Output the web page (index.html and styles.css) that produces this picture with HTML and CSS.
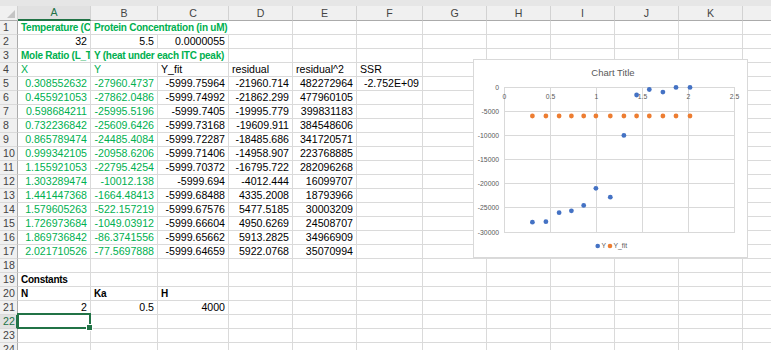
FILE: index.html
```html
<!DOCTYPE html>
<html lang="en">
<head>
  <meta charset="UTF-8">
  <title>ITC fit</title>
  <link rel="stylesheet" href="styles.css">
</head>
<body>
  <div class="ribbon"></div>

  <table class="sheet">
    <colgroup>
      <col class="w-rn"><col class="w-a"><col class="w-b"><col class="w-c"><col class="w-d"><col class="w-e">
      <col class="w-f"><col class="w-g"><col class="w-g"><col class="w-g"><col class="w-g"><col class="w-g"><col class="w-g">
    </colgroup>
    <thead>
      <tr>
        <th class="corner"><svg width="8" height="8" viewBox="0 0 8 8"><polygon points="8,0 8,8 0,8" fill="#c4c4c4"/></svg></th>
        <th class="on">A</th><th>B</th><th>C</th><th>D</th><th>E</th><th>F</th><th>G</th><th>H</th><th>I</th><th>J</th><th>K</th><th></th>
      </tr>
    </thead>
    <tbody>
      <tr><th>1</th><td class="b g">Temperature (C)</td><td class="b g" colspan="3">Protein Concentration (in uM)</td><td></td><td></td><td></td><td></td><td></td><td></td><td></td><td></td></tr>
      <tr><th>2</th><td class="n">32</td><td class="n">5.5</td><td class="n">0.0000055</td><td></td><td></td><td></td><td></td><td></td><td></td><td></td><td></td><td></td></tr>
      <tr><th>3</th><td class="b g">Mole Ratio (L_T/M_T)</td><td class="b g" colspan="2">Y (heat under each ITC peak)</td><td></td><td></td><td></td><td></td><td></td><td></td><td></td><td></td><td></td></tr>
      <tr><th>4</th><td class="g">X</td><td class="g">Y</td><td>Y_fit</td><td>residual</td><td>residual^2</td><td>SSR</td><td></td><td></td><td></td><td></td><td></td><td></td></tr>
      <tr><th>5</th><td class="n g">0.308552632</td><td class="n g">-27960.4737</td><td class="n">-5999.75964</td><td class="n">-21960.714</td><td class="n">482272964</td><td class="n">-2.752E+09</td><td></td><td></td><td></td><td></td><td></td><td></td></tr>
      <tr><th>6</th><td class="n g">0.455921053</td><td class="n g">-27862.0486</td><td class="n">-5999.74992</td><td class="n">-21862.299</td><td class="n">477960105</td><td></td><td></td><td></td><td></td><td></td><td></td><td></td></tr>
      <tr><th>7</th><td class="n g">0.598684211</td><td class="n g">-25995.5196</td><td class="n">-5999.7405</td><td class="n">-19995.779</td><td class="n">399831183</td><td></td><td></td><td></td><td></td><td></td><td></td><td></td></tr>
      <tr><th>8</th><td class="n g">0.732236842</td><td class="n g">-25609.6426</td><td class="n">-5999.73168</td><td class="n">-19609.911</td><td class="n">384548606</td><td></td><td></td><td></td><td></td><td></td><td></td><td></td></tr>
      <tr><th>9</th><td class="n g">0.865789474</td><td class="n g">-24485.4084</td><td class="n">-5999.72287</td><td class="n">-18485.686</td><td class="n">341720571</td><td></td><td></td><td></td><td></td><td></td><td></td><td></td></tr>
      <tr><th>10</th><td class="n g">0.999342105</td><td class="n g">-20958.6206</td><td class="n">-5999.71406</td><td class="n">-14958.907</td><td class="n">223768885</td><td></td><td></td><td></td><td></td><td></td><td></td><td></td></tr>
      <tr><th>11</th><td class="n g">1.155921053</td><td class="n g">-22795.4254</td><td class="n">-5999.70372</td><td class="n">-16795.722</td><td class="n">282096268</td><td></td><td></td><td></td><td></td><td></td><td></td><td></td></tr>
      <tr><th>12</th><td class="n g">1.303289474</td><td class="n g">-10012.138</td><td class="n">-5999.694</td><td class="n">-4012.444</td><td class="n">16099707</td><td></td><td></td><td></td><td></td><td></td><td></td><td></td></tr>
      <tr><th>13</th><td class="n g">1.441447368</td><td class="n g">-1664.48413</td><td class="n">-5999.68488</td><td class="n">4335.2008</td><td class="n">18793966</td><td></td><td></td><td></td><td></td><td></td><td></td><td></td></tr>
      <tr><th>14</th><td class="n g">1.579605263</td><td class="n g">-522.157219</td><td class="n">-5999.67576</td><td class="n">5477.5185</td><td class="n">30003209</td><td></td><td></td><td></td><td></td><td></td><td></td><td></td></tr>
      <tr><th>15</th><td class="n g">1.726973684</td><td class="n g">-1049.03912</td><td class="n">-5999.66604</td><td class="n">4950.6269</td><td class="n">24508707</td><td></td><td></td><td></td><td></td><td></td><td></td><td></td></tr>
      <tr><th>16</th><td class="n g">1.869736842</td><td class="n g">-86.3741556</td><td class="n">-5999.65662</td><td class="n">5913.2825</td><td class="n">34966909</td><td></td><td></td><td></td><td></td><td></td><td></td><td></td></tr>
      <tr><th>17</th><td class="n g">2.021710526</td><td class="n g">-77.5697888</td><td class="n">-5999.64659</td><td class="n">5922.0768</td><td class="n">35070994</td><td></td><td></td><td></td><td></td><td></td><td></td><td></td></tr>
      <tr><th>18</th><td></td><td></td><td></td><td></td><td></td><td></td><td></td><td></td><td></td><td></td><td></td><td></td></tr>
      <tr><th>19</th><td class="b">Constants</td><td></td><td></td><td></td><td></td><td></td><td></td><td></td><td></td><td></td><td></td><td></td></tr>
      <tr><th>20</th><td class="b">N</td><td class="b">Ka</td><td class="b">H</td><td></td><td></td><td></td><td></td><td></td><td></td><td></td><td></td><td></td></tr>
      <tr><th>21</th><td class="n">2</td><td class="n">0.5</td><td class="n">4000</td><td></td><td></td><td></td><td></td><td></td><td></td><td></td><td></td><td></td></tr>
      <tr><th class="on">22</th><td class="sel"></td><td></td><td></td><td></td><td></td><td></td><td></td><td></td><td></td><td></td><td></td><td></td></tr>
      <tr><th>23</th><td></td><td></td><td></td><td></td><td></td><td></td><td></td><td></td><td></td><td></td><td></td><td></td></tr>
      <tr><th>24</th><td></td><td></td><td></td><td></td><td></td><td></td><td></td><td></td><td></td><td></td><td></td><td></td></tr>
    </tbody>
  </table>

  <!-- scatter chart floating over the sheet -->
  <div class="chart">
    <svg width="275" height="199" viewBox="0 0 275 199">
      <rect x="0.5" y="0.5" width="274" height="198" fill="#fff" stroke="#d9d9d9"/>
      <text class="title" x="140" y="16.5" text-anchor="middle">Chart Title</text>
      <g stroke="#d9d9d9" stroke-width="1" fill="none">
        <path d="M31 28.5H262M31 52.5H262M31 76.5H262M31 100.5H262M31 124.5H262M31 148.5H262M31 173.5H262"/>
        <path d="M31.5 28V174M77.5 28V174M123.5 28V174M169.5 28V174M215.5 28V174M261.5 28V174"/>
      </g>
      <g text-anchor="end">
        <text x="26" y="30.8">0</text>
        <text x="26" y="54.8">-5000</text>
        <text x="26" y="78.8">-10000</text>
        <text x="26" y="102.8">-15000</text>
        <text x="26" y="126.8">-20000</text>
        <text x="26" y="150.8">-25000</text>
        <text x="26" y="175.8">-30000</text>
      </g>
      <g text-anchor="middle">
        <text x="31.5" y="40">0</text>
        <text x="77.5" y="40">0.5</text>
        <text x="123.5" y="40">1</text>
        <text x="169.5" y="40">1.5</text>
        <text x="215.5" y="40">2</text>
        <text x="261.5" y="40">2.5</text>
      </g>
      <g fill="#ed7d31">
        <circle cx="59.4" cy="57" r="2.4"/><circle cx="72.9" cy="57" r="2.4"/><circle cx="86.1" cy="57" r="2.4"/>
        <circle cx="98.4" cy="57" r="2.4"/><circle cx="110.7" cy="57" r="2.4"/><circle cx="122.9" cy="57" r="2.4"/>
        <circle cx="137.3" cy="57" r="2.4"/><circle cx="150.9" cy="57" r="2.4"/><circle cx="163.6" cy="57" r="2.4"/>
        <circle cx="176.3" cy="57" r="2.4"/><circle cx="189.9" cy="57" r="2.4"/><circle cx="203" cy="57" r="2.4"/>
        <circle cx="217" cy="57" r="2.4"/>
      </g>
      <g fill="#4472c4">
        <circle cx="59.4" cy="163.2" r="2.4"/><circle cx="72.9" cy="162.7" r="2.4"/><circle cx="86.1" cy="153.7" r="2.4"/>
        <circle cx="98.4" cy="151.8" r="2.4"/><circle cx="110.7" cy="146.4" r="2.4"/><circle cx="122.9" cy="129.3" r="2.4"/>
        <circle cx="137.3" cy="138.2" r="2.4"/><circle cx="150.9" cy="76.4" r="2.4"/><circle cx="163.6" cy="36" r="2.4"/>
        <circle cx="176.3" cy="30.5" r="2.4"/><circle cx="189.9" cy="33.1" r="2.4"/><circle cx="203" cy="28.4" r="2.4"/>
        <circle cx="217" cy="28.4" r="2.4"/>
      </g>
      <circle cx="124.7" cy="187" r="2.3" fill="#4472c4"/>
      <text x="128.5" y="189.4">Y</text>
      <circle cx="137" cy="187" r="2.3" fill="#ed7d31"/>
      <text x="140.5" y="189.4">Y_fit</text>
    </svg>
  </div>
</body>
</html>
```

FILE: styles.css
```css
body {
  margin: 0;
  width: 771px;
  height: 350px;
  overflow: hidden;
  background-color: #fff;
  font-family: 'Liberation Sans', Arial, sans-serif;
  font-size: 10.6px;
  color: #000;
}

.ribbon {
  height: 6px;
  background-color: #e6e6e6;
}

/* sheet grid */
.sheet {
  border-collapse: separate;
  border-spacing: 0;
  table-layout: fixed;
  width: 807px;
}

.w-rn { width: 18px; }
.w-a { width: 73px; }
.w-b { width: 67px; }
.w-c { width: 71px; }
.w-d, .w-e, .w-g { width: 64px; }
.w-f { width: 66px; }

.sheet th,
.sheet td {
  box-sizing: border-box;
  height: 14px;
  padding: 0 3px;
  line-height: 13px;
  white-space: nowrap;
  overflow: hidden;
  text-align: left;
  font-weight: normal;
  border-right: 1px solid #dadada;
  border-bottom: 1px solid #dadada;
}

.sheet thead th {
  height: 15px;
  padding: 0;
  text-align: center;
  background-color: #f0f0f0;
  color: #444;
  border-right-color: #d2d2d2;
  border-bottom-color: #ababab;
}

.sheet thead th.corner {
  text-align: right;
  vertical-align: bottom;
  padding: 0 2px 2px 0;
  line-height: 0;
}

.sheet thead th.on {
  background-color: #e1e1e1;
  color: #217346;
  border-bottom: 2px solid #217346;
}

.sheet tbody th {
  background-color: #f0f0f0;
  color: #444;
  padding: 0 0 0 3px;
  border-right-color: #ababab;
  border-bottom-color: #dadada;
}

.sheet tbody th.on {
  background-color: #e1e1e1;
  color: #217346;
  border-right: 2px solid #217346;
}

.sheet td.n { text-align: right; }

.sheet td.g { color: #00b050; }

.sheet td.b {
  font-weight: bold;
  font-size: 10px;
  letter-spacing: -0.25px;
}

/* active cell */
.sheet td.sel {
  position: relative;
  overflow: visible;
}

.sheet td.sel::after {
  content: "";
  position: absolute;
  left: -1px;
  top: -2px;
  right: -1px;
  bottom: -1px;
  border: 2px solid #217346;
}

.sheet td.sel::before {
  content: "";
  position: absolute;
  right: -3px;
  bottom: -3px;
  width: 5px;
  height: 5px;
  background-color: #217346;
  border: 1px solid #fff;
  z-index: 1;
}

/* chart */
.chart {
  position: absolute;
  left: 473px;
  top: 59px;
  width: 275px;
  height: 199px;
}

.chart svg {
  display: block;
}

.chart text {
  font-family: 'Liberation Sans', Arial, sans-serif;
  font-size: 6.8px;
  fill: #595959;
}

.chart text.title {
  font-size: 9.5px;
}
```
